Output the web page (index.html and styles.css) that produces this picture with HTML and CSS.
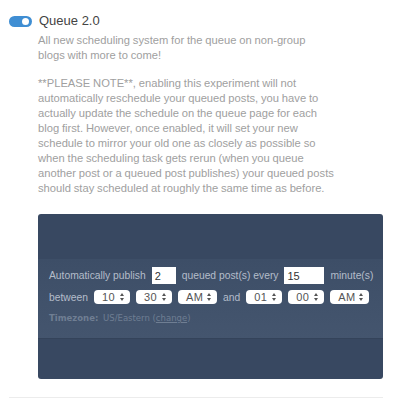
FILE: index.html
```html
<!DOCTYPE html>
<html>
<head>
<meta charset="utf-8">
<link rel="stylesheet" href="styles.css">
</head>
<body>
<div class="experiment">
  <div class="head">
    <span class="toggle"><span class="knob"></span></span>
    <h2 class="title">Queue 2.0</h2>
  </div>
  <div class="content">
    <p class="desc">All new scheduling system for the queue on non-group blogs with more to come!</p>
    <p class="desc note">**PLEASE NOTE**, enabling this experiment will not automatically reschedule your queued posts, you have to actually update the schedule on the queue page for each blog first. However, once enabled, it will set your new schedule to mirror your old one as closely as possible so when the scheduling task gets rerun (when you queue another post or a queued post publishes) your queued posts should stay scheduled at roughly the same time as before.</p>
    <div class="panel">
      <div class="panel-top"></div>
      <div class="panel-mid">
        <div class="row">
          <span>Automatically publish</span>
          <span class="input small">2</span>
          <span>queued post(s) every</span>
          <span class="input wide">15</span>
          <span>minute(s)</span>
        </div>
        <div class="row row2">
          <span>between</span>
          <span class="select">10<span class="arrows"></span></span>
          <span class="select">30<span class="arrows"></span></span>
          <span class="select ampm">AM<span class="arrows"></span></span>
          <span>and</span>
          <span class="select">01<span class="arrows"></span></span>
          <span class="select">00<span class="arrows"></span></span>
          <span class="select ampm">AM<span class="arrows"></span></span>
        </div>
        <div class="tz"><b>Timezone:</b> US/Eastern (<u>change</u>)</div>
      </div>
      <div class="panel-bottom"></div>
    </div>
  </div>
  <div class="rule"></div>
</div>
</body>
</html>
```

FILE: styles.css
```css
html, body {
  margin: 0;
  padding: 0;
  background: #fff;
}
body {
  font-family: "Liberation Sans", Arial, sans-serif;
}
.experiment {
  padding: 13px 0 0 9px;
  width: 374px;
}
.head {
  display: flex;
  align-items: center;
  gap: 7px;
  height: 16px;
}
.toggle {
  position: relative;
  display: block;
  width: 23px;
  height: 11px;
  border-radius: 6px;
  background: #3f8ed3;
}
.knob {
  position: absolute;
  right: 3px;
  top: 2px;
  width: 7px;
  height: 7px;
  border-radius: 50%;
  background: #fff;
}
.title {
  margin: 0;
  font-size: 13px;
  font-weight: normal;
  color: #444;
  line-height: 16px;
}
.content {
  padding-left: 29px;
  width: 345px;
}
.desc {
  margin: 4px 0 0;
  width: 297px;
  font-size: 11.2px;
  word-spacing: -0.3px;
  line-height: 15px;
  color: #a0a0a0;
}
.desc.note {
  margin-top: 13px;
}
.panel {
  margin-top: 18px;
  border-radius: 3px;
  background: #384861;
  overflow: hidden;
}
.panel-top {
  height: 45px;
}
.panel-mid {
  height: 80px;
  box-sizing: border-box;
  background: linear-gradient(#3d4e67, #44556e);
  border-bottom: 1px solid #34435a;
  padding: 8px 0 0 11px;
  color: #b4bdca;
  font-size: 10.3px;
  white-space: nowrap;
}
.row {
  display: flex;
  align-items: center;
  gap: 6px;
  height: 17px;
}
.input {
  display: block;
  background: #fff;
  color: #333;
  height: 17px;
  line-height: 18px;
  box-sizing: border-box;
  padding-left: 3px;
  font-size: 11px;
}
.input.small { width: 24px; }
.input.wide { width: 40px; }
.row2 {
  margin-top: 6px;
  height: 14px;
}
.select {
  position: relative;
  display: block;
  width: 36px;
  height: 14px;
  line-height: 14px;
  box-sizing: border-box;
  border-radius: 4px;
  background: #fff;
  color: #555;
  font-size: 11px;
  padding-left: 8px;
  letter-spacing: 0.5px;
}
.select.ampm { width: 39px; }
.arrows {
  position: absolute;
  right: 5px;
  top: 3px;
  width: 5px;
  height: 8px;
}
.arrows::before, .arrows::after {
  content: "";
  position: absolute;
  left: 0;
  border-left: 2.5px solid transparent;
  border-right: 2.5px solid transparent;
}
.arrows::before {
  top: 0;
  border-bottom: 3px solid #555;
}
.arrows::after {
  bottom: 0;
  border-top: 3px solid #555;
}
.tz {
  margin-top: 9px;
  font-family: "DejaVu Sans", sans-serif;
  font-size: 8.5px;
  color: #6f7e93;
}
.tz b {
  font-weight: bold;
  margin-right: 2px;
}
.tz u {
  text-decoration: underline;
}
.panel-bottom {
  height: 40px;
}
.rule {
  margin-top: 18px;
  height: 1px;
  background: #ececec;
}
```
